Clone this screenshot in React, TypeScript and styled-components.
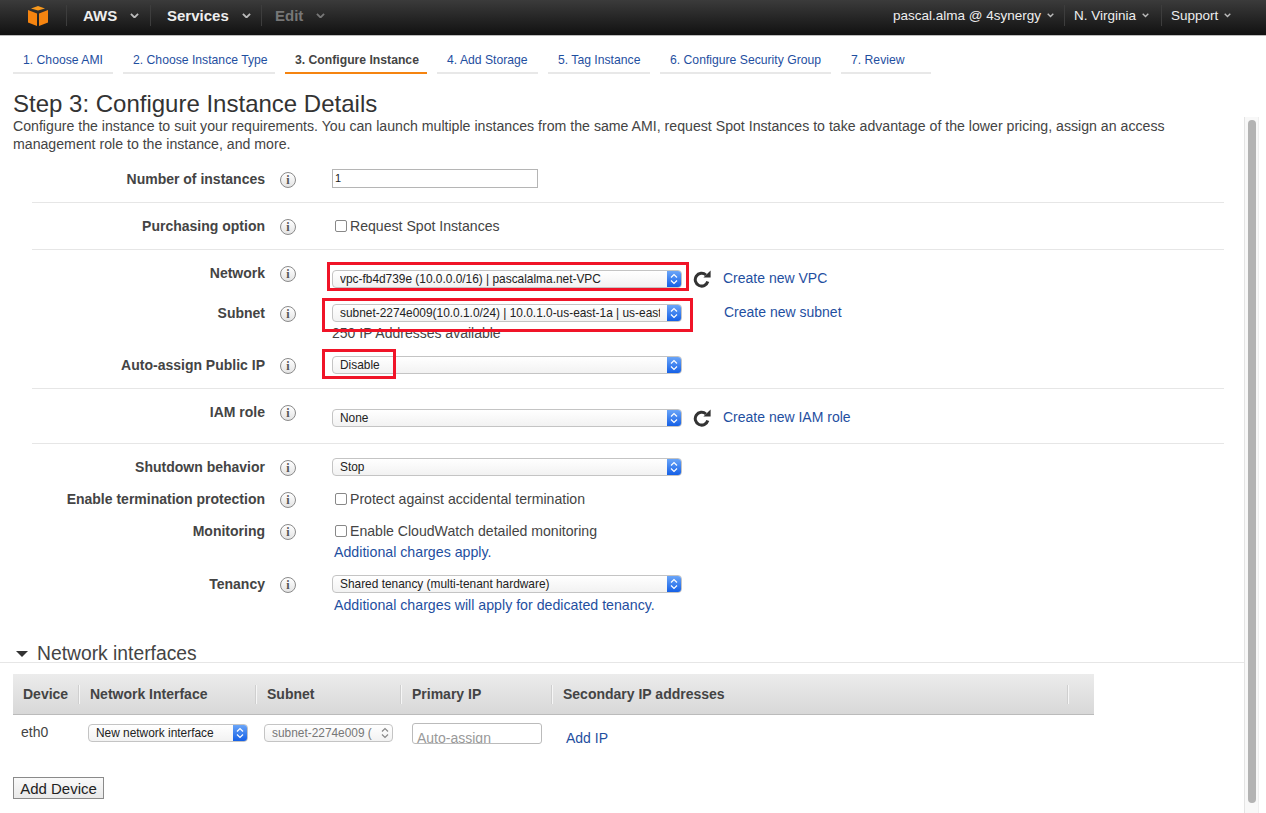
import React from "react";
import styled, { createGlobalStyle } from "styled-components";

const GlobalStyle = createGlobalStyle`
  html, body { margin: 0; padding: 0; height: 813px; overflow: hidden; background: #fff; }
  body { font-family: "Liberation Sans", Arial, sans-serif; color: #444; }
`;

const Page = styled.div`
  width: 1266px;
  height: 813px;
  position: relative;
  overflow: hidden;
`;

const TopBar = styled.div`
  height: 35px;
  display: flex;
  justify-content: space-between;
  background: linear-gradient(#3b3b3b, #111);
  border-bottom: 1px solid #bbb;
  box-sizing: content-box;
`;

const NavGroup = styled.div`
  display: flex;
  align-items: flex-start;
  height: 35px;
  padding-top: 5px;
  box-sizing: border-box;
`;

const LogoCell = styled.div`
  width: 67px;
  height: 21px;
  padding-left: 28px;
  box-sizing: border-box;
  border-right: 1px solid #3d3d3d;
  display: flex;
  align-items: center;
`;

const NavItem = styled.div<{ $w: number; $dim?: boolean; $big?: boolean }>`
  width: ${(p) => p.$w}px;
  height: 21px;
  box-sizing: border-box;
  display: flex;
  align-items: center;
  gap: ${(p) => (p.$big ? 13 : 6)}px;
  padding-left: ${(p) => (p.$dim ? 13 : p.$big ? 16 : 9)}px;
  font-size: ${(p) => (p.$big ? 15 : 13.5)}px;
  font-weight: ${(p) => (p.$big ? 700 : 400)};
  color: ${(p) => (p.$dim ? "#777" : "#eee")};
  border-right: 1px solid #3d3d3d;
  &:last-child { border-right: 0; }
`;

const Tabs = styled.div`
  display: flex;
  gap: 10px;
  padding: 15px 0 0 13px;
`;

const Tab = styled.div<{ $w: number; $active?: boolean }>`
  width: ${(p) => p.$w}px;
  height: 23px;
  box-sizing: border-box;
  padding: 2px 0 0 10px;
  font-size: 12.2px;
  line-height: 15px;
  color: ${(p) => (p.$active ? "#444" : "#1f4f9f")};
  font-weight: ${(p) => (p.$active ? 700 : 400)};
  border-bottom: 2px solid ${(p) => (p.$active ? "#f58410" : "#e8e8e8")};
`;

const Title = styled.h1`
  margin: 17px 0 0 13px;
  font-size: 24px;
  line-height: 26px;
  font-weight: 400;
  color: #333;
`;

const Intro = styled.p`
  margin: 0 0 0 13px;
  width: 1200px;
  font-size: 14.15px;
  line-height: 18px;
  color: #444;
`;

const Form = styled.div`
  width: 1192px;
  margin: 8px 0 0 32px;
`;

const Row = styled.div<{ $h: number; $rule?: boolean }>`
  height: ${(p) => p.$h}px;
  box-sizing: border-box;
  display: flex;
  border-bottom: ${(p) => (p.$rule ? "1px solid #e6e6e6" : "0")};
`;

const Label = styled.div<{ $top: number }>`
  width: 233px;
  padding-top: ${(p) => p.$top}px;
  text-align: right;
  font-size: 14px;
  line-height: 18px;
  font-weight: 700;
  color: #444;
`;

const InfoSlot = styled.div<{ $top: number }>`
  width: 67px;
  padding: ${(p) => p.$top}px 0 0 15px;
  box-sizing: border-box;
`;

const InfoDot = styled.span`
  display: flex;
  width: 16px;
  height: 16px;
  box-sizing: border-box;
  border: 1px solid #8a8a8a;
  border-radius: 50%;
  background: linear-gradient(#fff, #e4e4e4);
  font-family: "Liberation Serif", serif;
  font-weight: 700;
  font-size: 12px;
  line-height: 14px;
  color: #555;
  justify-content: center;
`;

const Field = styled.div<{ $top: number }>`
  padding-top: ${(p) => p.$top}px;
  display: flex;
  flex-direction: column;
  flex: 1;
`;

const Line = styled.div`
  display: flex;
  align-items: center;
`;

const TextBox = styled.div`
  width: 206px;
  height: 19px;
  box-sizing: border-box;
  border: 1px solid #b5b5b5;
  font-size: 11px;
  line-height: 17px;
  padding-left: 2px;
  color: #222;
`;

const Check = styled.span`
  width: 10px;
  height: 10px;
  margin: 0 3px;
  border: 1px solid #888;
  border-radius: 2px;
  background: #fff;
`;

const CheckText = styled.span`
  font-size: 14.1px;
  line-height: 18px;
  color: #444;
`;

const SelectBox = styled.div<{ $w: number; $muted?: boolean }>`
  position: relative;
  width: ${(p) => p.$w}px;
  height: 18px;
  box-sizing: border-box;
  background: linear-gradient(#fff, #f2f2f2);
  border: 1px solid #c4c4c4;
  border-radius: 4px;
  padding-left: 7px;
  font-size: 11.9px;
  line-height: 17px;
  color: ${(p) => (p.$muted ? "#777" : "#222")};
  white-space: nowrap;
  overflow: hidden;
`;

const SelectText = styled.span<{ $w: number }>`
  display: block;
  width: ${(p) => p.$w}px;
  overflow: hidden;
`;

const Stepper = styled.span<{ $muted?: boolean }>`
  position: absolute;
  right: 0;
  top: 0;
  bottom: 0;
  width: 14px;
  display: flex;
  align-items: center;
  justify-content: center;
  background: ${(p) => (p.$muted ? "transparent" : "linear-gradient(#6aa5f8, #1560e6)")};
`;

const Link = styled.span`
  font-size: 14px;
  line-height: 18px;
  color: #1f4f9f;
`;

const RowLink = styled(Link)`
  align-self: flex-start;
  line-height: 16px;
`;

const SubnetLink = styled(RowLink)`
  margin-left: 42px;
`;

const RefreshSlot = styled.span`
  display: flex;
  width: 41px;
  padding-left: 11px;
  box-sizing: border-box;
`;

const Note = styled(Link)`
  display: block;
  margin-top: 4px;
  padding-left: 2px;
  font-size: 14.2px;
  line-height: 16px;
`;

const Plain = styled.div`
  margin-top: 4px;
  font-size: 14px;
  line-height: 14px;
  color: #444;
`;

const RedBox = styled.div<{ $l: number; $t: number; $w: number; $h: number }>`
  position: absolute;
  left: ${(p) => p.$l}px;
  top: ${(p) => p.$t}px;
  width: ${(p) => p.$w}px;
  height: ${(p) => p.$h}px;
  box-sizing: border-box;
  border: 3px solid #f01428;
`;

const SectionHead = styled.div`
  margin: 22px 21px 0 0;
  height: 17px;
  box-sizing: content-box;
  border-bottom: 1px solid #e6e6e6;
  display: flex;
  align-items: center;
  padding-left: 16px;
  gap: 9px;
  font-size: 19.3px;
  line-height: 18px;
  color: #444;
`;

const Caret = styled.span`
  width: 0;
  height: 0;
  border-left: 6px solid transparent;
  border-right: 6px solid transparent;
  border-top: 6px solid #333;
`;

const GridHead = styled.div`
  margin: 11px 0 0 13px;
  width: 1081px;
  height: 41px;
  box-sizing: border-box;
  display: flex;
  align-items: center;
  background: linear-gradient(#ececec, #d8d8d8);
  border-bottom: 1px solid #bbb;
`;

const HeadCell = styled.div<{ $w: number }>`
  width: ${(p) => p.$w}px;
  height: 19px;
  box-sizing: border-box;
  padding-left: 10px;
  font-size: 14px;
  line-height: 19px;
  font-weight: 700;
  color: #444;
  border-right: 1px solid #f6f6f6;
  box-shadow: inset -1px 0 0 #cfcfcf;
`;

const GridRow = styled.div`
  display: flex;
  height: 62px;
  margin-left: 13px;
`;

const Cell = styled.div<{ $w: number; $top: number }>`
  width: ${(p) => p.$w}px;
  padding: ${(p) => p.$top}px 0 0 8px;
  box-sizing: border-box;
  font-size: 14px;
  line-height: 16px;
  color: #444;
`;

const AutoBox = styled.div`
  width: 130px;
  height: 21px;
  box-sizing: border-box;
  border: 1px solid #bbb;
  border-radius: 3px;
  font-size: 14px;
  line-height: 28px;
  padding-left: 4px;
  color: #999;
  overflow: hidden;
`;

const AddDevice = styled.button`
  display: block;
  margin: 0 0 0 13px;
  width: 91px;
  height: 22px;
  padding: 0;
  border: 1px solid #8a8a8a;
  background: linear-gradient(#fafafa, #e9e9e9);
  font-family: inherit;
  font-size: 15px;
  color: #222;
`;

const ScrollTrack = styled.div`
  position: absolute;
  left: 1244px;
  top: 117px;
  width: 15px;
  height: 696px;
  background: #f8f8f8;
  border-left: 1px solid #e4e4e4;
  border-right: 1px solid #eee;
  box-sizing: border-box;
`;

const ScrollThumb = styled.div`
  width: 8px;
  height: 683px;
  margin: 3px 0 0 3px;
  border-radius: 4px;
  background: #b3b3b3;
`;

const Chevron = ({ color = "#bbb", size = 9 }: { color?: string; size?: number }) => (
  <svg width={size} height={size * 0.6} viewBox="0 0 10 6">
    <path d="M1 1l4 4 4-4" fill="none" stroke={color} strokeWidth="2" />
  </svg>
);

const Cube = () => (
  <svg width="20" height="20" viewBox="0 0 20 20">
    <path d="M10 0L17 2.5 10 4.6 3 2.5z" fill="#f7981d" />
    <path d="M0 4L9 7.4V20L0 16.5z" fill="#f58410" />
    <path d="M20 4L11 7.4V20L20 16.5z" fill="#f58410" />
  </svg>
);

const UpDown = ({ color = "#fff" }: { color?: string }) => (
  <svg width="8" height="12" viewBox="0 0 8 12">
    <path d="M1 4.5L4 1.5l3 3M1 7.5l3 3 3-3" fill="none" stroke={color} strokeWidth="1.2" />
  </svg>
);

const Refresh = () => (
  <svg width="18" height="18" viewBox="0 0 18 18">
    <path d="M14.8 11.5A6.4 6.4 0 1 1 13 5" fill="none" stroke="#333" strokeWidth="3" />
    <path d="M10.4 7.6L17.6 7.6 17.6 0.6z" fill="#333" />
  </svg>
);

const Info = ({ top }: { top: number }) => (
  <InfoSlot $top={top}>
    <InfoDot>i</InfoDot>
  </InfoSlot>
);

const Select = ({ w, text, textW }: { w: number; text: string; textW?: number }) => (
  <SelectBox $w={w}>
    <SelectText $w={textW ?? w - 24}>{text}</SelectText>
    <Stepper>
      <UpDown />
    </Stepper>
  </SelectBox>
);

const steps = [
  { label: "1. Choose AMI", w: 100 },
  { label: "2. Choose Instance Type", w: 152 },
  { label: "3. Configure Instance", w: 142, active: true },
  { label: "4. Add Storage", w: 101 },
  { label: "5. Tag Instance", w: 102 },
  { label: "6. Configure Security Group", w: 171 },
  { label: "7. Review", w: 90 },
];

export default function App() {
  return (
    <Page>
      <GlobalStyle />
      <TopBar>
        <NavGroup>
          <LogoCell>
            <Cube />
          </LogoCell>
          <NavItem $big $w={84}>
            AWS <Chevron />
          </NavItem>
          <NavItem $big $w={111}>
            Services <Chevron />
          </NavItem>
          <NavItem $big $dim $w={70}>
            Edit <Chevron color="#777" />
          </NavItem>
        </NavGroup>
        <NavGroup>
          <NavItem $w={181}>
            pascal.alma @ 4synergy <Chevron size={7} />
          </NavItem>
          <NavItem $w={97}>
            N. Virginia <Chevron size={7} />
          </NavItem>
          <NavItem $w={104}>
            Support <Chevron size={7} />
          </NavItem>
        </NavGroup>
      </TopBar>

      <Tabs>
        {steps.map((s) => (
          <Tab key={s.label} $w={s.w} $active={s.active}>
            {s.label}
          </Tab>
        ))}
      </Tabs>

      <Title>Step 3: Configure Instance Details</Title>
      <Intro>
        Configure the instance to suit your requirements. You can launch multiple instances from the same AMI, request
        Spot Instances to take advantage of the lower pricing, assign an access management role to the instance, and
        more.
      </Intro>

      <Form>
        <Row $h={42} $rule>
          <Label $top={9}>Number of instances</Label>
          <Info top={11} />
          <Field $top={8}>
            <TextBox>1</TextBox>
          </Field>
        </Row>
        <Row $h={47} $rule>
          <Label $top={14}>Purchasing option</Label>
          <Info top={16} />
          <Field $top={14}>
            <Line>
              <Check />
              <CheckText>Request Spot Instances</CheckText>
            </Line>
          </Field>
        </Row>
        <Row $h={40}>
          <Label $top={14}>Network</Label>
          <Info top={16} />
          <Field $top={20}>
            <Line>
              <Select w={350} text="vpc-fb4d739e (10.0.0.0/16) | pascalalma.net-VPC" />
              <RefreshSlot>
                <Refresh />
              </RefreshSlot>
              <RowLink>Create new VPC</RowLink>
            </Line>
          </Field>
        </Row>
        <Row $h={52}>
          <Label $top={14}>Subnet</Label>
          <Info top={16} />
          <Field $top={14}>
            <Line>
              <Select w={350} text="subnet-2274e009(10.0.1.0/24) | 10.0.1.0-us-east-1a | us-east-1a" textW={320} />
              <SubnetLink>Create new subnet</SubnetLink>
            </Line>
            <Plain>250 IP Addresses available</Plain>
          </Field>
        </Row>
        <Row $h={47} $rule>
          <Label $top={14}>Auto-assign Public IP</Label>
          <Info top={16} />
          <Field $top={14}>
            <Select w={350} text="Disable" />
          </Field>
        </Row>
        <Row $h={55} $rule>
          <Label $top={14}>IAM role</Label>
          <Info top={16} />
          <Field $top={20}>
            <Line>
              <Select w={350} text="None" />
              <RefreshSlot>
                <Refresh />
              </RefreshSlot>
              <RowLink>Create new IAM role</RowLink>
            </Line>
          </Field>
        </Row>
        <Row $h={44}>
          <Label $top={14}>Shutdown behavior</Label>
          <Info top={16} />
          <Field $top={14}>
            <Select w={350} text="Stop" />
          </Field>
        </Row>
        <Row $h={32}>
          <Label $top={2}>Enable termination protection</Label>
          <Info top={4} />
          <Field $top={2}>
            <Line>
              <Check />
              <CheckText>Protect against accidental termination</CheckText>
            </Line>
          </Field>
        </Row>
        <Row $h={53}>
          <Label $top={2}>Monitoring</Label>
          <Info top={4} />
          <Field $top={2}>
            <Line>
              <Check />
              <CheckText>Enable CloudWatch detailed monitoring</CheckText>
            </Line>
            <Note>Additional charges apply.</Note>
          </Field>
        </Row>
        <Row $h={50}>
          <Label $top={2}>Tenancy</Label>
          <Info top={4} />
          <Field $top={2}>
            <Select w={350} text="Shared tenancy (multi-tenant hardware)" />
            <Note>Additional charges will apply for dedicated tenancy.</Note>
          </Field>
        </Row>
      </Form>

      <SectionHead>
        <Caret />
        Network interfaces
      </SectionHead>

      <GridHead>
        <HeadCell $w={67}>Device</HeadCell>
        <HeadCell $w={177}>Network Interface</HeadCell>
        <HeadCell $w={145}>Subnet</HeadCell>
        <HeadCell $w={151}>Primary IP</HeadCell>
        <HeadCell $w={516}>Secondary IP addresses</HeadCell>
      </GridHead>
      <GridRow>
        <Cell $w={67} $top={9}>
          eth0
        </Cell>
        <Cell $w={176} $top={9}>
          <Select w={160} text="New network interface" />
        </Cell>
        <Cell $w={148} $top={9}>
          <SelectBox $w={129} $muted>
            subnet-2274e009 (
            <Stepper $muted>
              <UpDown color="#888" />
            </Stepper>
          </SelectBox>
        </Cell>
        <Cell $w={154} $top={8}>
          <AutoBox>Auto-assign</AutoBox>
        </Cell>
        <Cell $w={80} $top={14}>
          <Link>Add IP</Link>
        </Cell>
      </GridRow>
      <AddDevice>Add Device</AddDevice>

      <RedBox $l={327} $t={262} $w={362} $h={29} />
      <RedBox $l={322} $t={298} $w={371} $h={34} />
      <RedBox $l={322} $t={349} $w={74} $h={30} />

      <ScrollTrack>
        <ScrollThumb />
      </ScrollTrack>
    </Page>
  );
}
